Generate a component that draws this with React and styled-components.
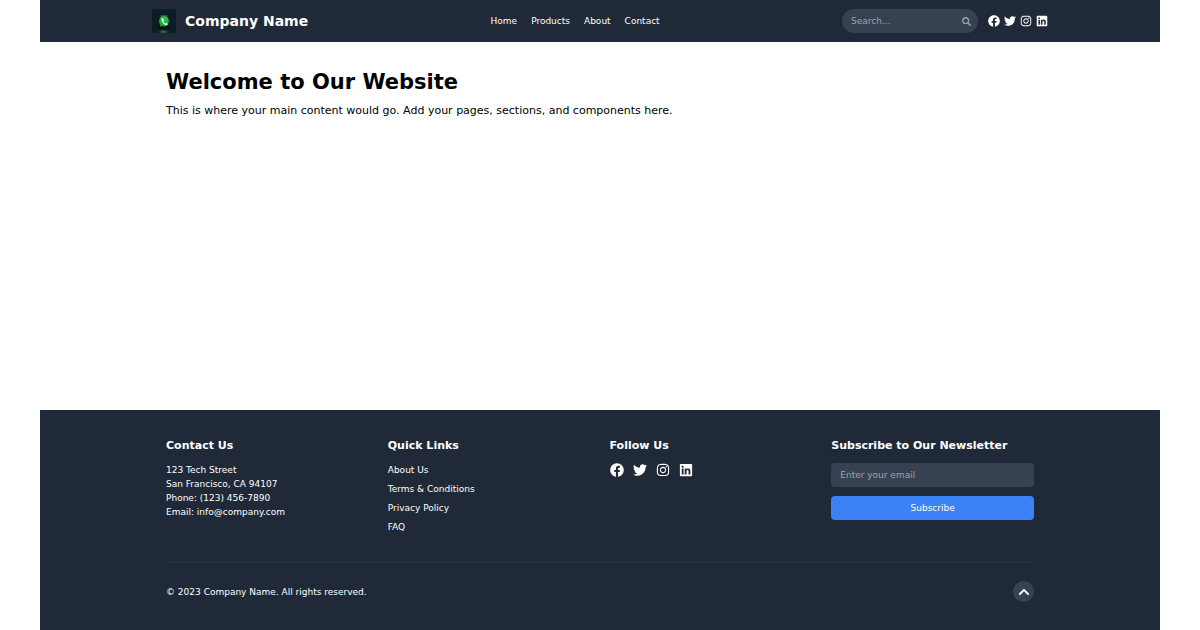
import React from "react";
import styled, { createGlobalStyle } from "styled-components";
import { FaFacebook, FaTwitter, FaInstagram, FaLinkedin, FaSearch, FaChevronUp } from "react-icons/fa";

const socials = [
  { name: "Facebook", Icon: FaFacebook },
  { name: "Twitter", Icon: FaTwitter },
  { name: "Instagram", Icon: FaInstagram },
  { name: "LinkedIn", Icon: FaLinkedin },
];

const navLinks = ["Home", "Products", "About", "Contact"];
const quickLinks = ["About Us", "Terms & Conditions", "Privacy Policy", "FAQ"];

function Logo() {
  return (
    <LogoSvg viewBox="0 0 40 40" role="img" aria-label="Company logo">
      <defs>
        <radialGradient id="glow">
          <stop offset="0" stopColor="#25a043" />
          <stop offset="1" stopColor="#0c1d24" stopOpacity="0" />
        </radialGradient>
        <linearGradient id="bubble" x1="0" y1="0" x2="0" y2="1">
          <stop offset="0" stopColor="#25c94d" />
          <stop offset="1" stopColor="#10a436" />
        </linearGradient>
      </defs>
      <rect width="40" height="40" fill="#0c1d24" />
      <ellipse cx="20" cy="31" rx="10" ry="3" fill="#061214" />
      <ellipse cx="19" cy="38" rx="12" ry="5" fill="url(#glow)" />
      <rect x="14" y="10" width="12" height="4" rx="1" fill="#3b4656" />
      <path d="M20 12c5 0 8 3 8 8 0 6-3 9-8 9-1 0-2 0-3-1l-4 2 1-5c-2-1-2-3-2-5 0-5 3-8 8-8z" fill="url(#bubble)" />
      <path d="M16 16l2-1 2 4-1 2c1 2 2 3 3 3l2-1 2 2c0 2-2 2-3 2-4-1-7-6-7-11z" fill="#e9fff0" />
    </LogoSvg>
  );
}

function SocialLinks({ size, gap }) {
  return (
    <Socials $gap={gap}>
      {socials.map(({ name, Icon }) => (
        <IconLink key={name} href="#" aria-label={name}>
          <Icon size={size} />
        </IconLink>
      ))}
    </Socials>
  );
}

function App() {
  const scrollTop = () => window.scrollTo({ top: 0, behavior: "smooth" });

  return (
    <>
      <GlobalStyle />
      <Page>
        <Header>
          <HeaderInner>
            <Brand>
              <Logo />
              <BrandName>Company Name</BrandName>
            </Brand>
            <Nav>
              {navLinks.map((link) => (
                <TextLink key={link} href="#">{link}</TextLink>
              ))}
            </Nav>
            <HeaderTools>
              <SearchBox>
                <SearchInput type="text" placeholder="Search..." aria-label="Search" />
                <FaSearch size={9} />
              </SearchBox>
              <SocialLinks size={12} gap={4} />
            </HeaderTools>
          </HeaderInner>
        </Header>

        <Main>
          <Title>Welcome to Our Website</Title>
          <Intro>This is where your main content would go. Add your pages, sections, and components here.</Intro>
        </Main>

        <Footer>
          <FooterInner>
            <Columns>
              <section>
                <Heading>Contact Us</Heading>
                <p>123 Tech Street</p>
                <p>San Francisco, CA 94107</p>
                <p>Phone: (123) 456-7890</p>
                <p>Email: info@company.com</p>
              </section>
              <section>
                <Heading>Quick Links</Heading>
                <LinkList>
                  {quickLinks.map((link) => (
                    <li key={link}><TextLink href="#">{link}</TextLink></li>
                  ))}
                </LinkList>
              </section>
              <section>
                <Heading>Follow Us</Heading>
                <SocialLinks size={14} gap={9} />
              </section>
              <section>
                <Heading>Subscribe to Our Newsletter</Heading>
                <Form onSubmit={(e) => e.preventDefault()}>
                  <EmailInput type="email" placeholder="Enter your email" aria-label="Email address" />
                  <SubscribeButton type="submit">Subscribe</SubscribeButton>
                </Form>
              </section>
            </Columns>
            <BottomBar>
              <p>© 2023 Company Name. All rights reserved.</p>
              <TopButton type="button" aria-label="Back to top" onClick={scrollTop}>
                <FaChevronUp size={12} />
              </TopButton>
            </BottomBar>
          </FooterInner>
        </Footer>
      </Page>
    </>
  );
}

const GlobalStyle = createGlobalStyle`
  *, *::before, *::after {
    box-sizing: border-box;
  }
  body, h1, h2, p, ul {
    margin: 0;
    padding: 0;
  }
  body {
    background: #fff;
    color: #000;
    font-family: "DejaVu Sans", sans-serif;
    font-size: 9px;
    line-height: 14px;
  }
  input, button {
    font: inherit;
    border: 0;
    margin: 0;
  }
  svg {
    display: block;
  }
`

const Page = styled.div`
  display: flex;
  flex-direction: column;
  min-height: 100vh;
  padding: 0 40px;
`

const Header = styled.header`
  background: #1f2937;
  color: #fff;
  padding: 9px 0;
`

const HeaderInner = styled.div`
  display: flex;
  align-items: center;
  justify-content: space-between;
  max-width: 896px;
  min-height: 24px;
  margin: 0 auto;
`

const Brand = styled.div`
  display: flex;
  align-items: center;
  gap: 9px;
`

const LogoSvg = styled.svg`
  width: 24px;
  height: 24px;
`

const BrandName = styled.span`
  font-size: 14px;
  line-height: 18px;
  font-weight: 700;
`

const Nav = styled.nav`
  display: flex;
  gap: 14px;
`

const TextLink = styled.a`
  color: inherit;
  text-decoration: none;
  &:hover {
    color: #d1d5db;
  }
`

const HeaderTools = styled.div`
  display: flex;
  align-items: center;
  gap: 10px;
`

const SearchBox = styled.div`
  display: flex;
  align-items: center;
  width: 136px;
  height: 24px;
  padding: 0 7px 0 9px;
  border-radius: 12px;
  background: #374151;
  color: #9ca3af;
`

const SearchInput = styled.input`
  flex: 1;
  min-width: 0;
  padding: 0;
  background: transparent;
  color: #fff;
  outline: none;
  &::placeholder {
    color: #9ca3af;
  }
`

const Socials = styled.div`
  display: flex;
  gap: ${(props) => props.$gap}px;
`

const IconLink = styled.a`
  color: #fff;
`

const Main = styled.main`
  flex: 1;
  width: 100%;
  max-width: 896px;
  margin: 0 auto;
  padding: 28px 14px;
`

const Title = styled.h1`
  font-size: 21px;
  line-height: 24px;
  font-weight: 700;
  margin-bottom: 9px;
`

const Intro = styled.p`
  font-size: 11px;
  line-height: 16px;
`

const Footer = styled.footer`
  background: #1f2937;
  color: #fff;
  padding: 28px 0;
`

const FooterInner = styled.div`
  max-width: 896px;
  margin: 0 auto;
  padding: 0 14px;
`

const Columns = styled.div`
  display: grid;
  grid-template-columns: repeat(4, 1fr);
  gap: 19px;
`

const Heading = styled.h2`
  font-size: 11px;
  line-height: 16px;
  font-weight: 700;
  margin-bottom: 9px;
`

const LinkList = styled.ul`
  display: flex;
  flex-direction: column;
  gap: 5px;
  list-style: none;
`

const Form = styled.form`
  display: flex;
  flex-direction: column;
  gap: 9px;
`

const EmailInput = styled.input`
  width: 100%;
  height: 24px;
  padding: 0 9px;
  border-radius: 4px;
  background: #374151;
  color: #fff;
  &::placeholder {
    color: #9ca3af;
  }
`

const SubscribeButton = styled.button`
  height: 24px;
  border-radius: 4px;
  background: #3b82f6;
  color: #fff;
  cursor: pointer;
`

const BottomBar = styled.div`
  display: flex;
  align-items: center;
  justify-content: space-between;
  margin-top: 28px;
  padding-top: 18px;
  border-top: 1px solid #283241;
`

const TopButton = styled.button`
  display: flex;
  align-items: center;
  justify-content: center;
  width: 21px;
  height: 21px;
  padding: 0;
  border-radius: 50%;
  background: #374151;
  color: #fff;
  cursor: pointer;
`

export default App;
